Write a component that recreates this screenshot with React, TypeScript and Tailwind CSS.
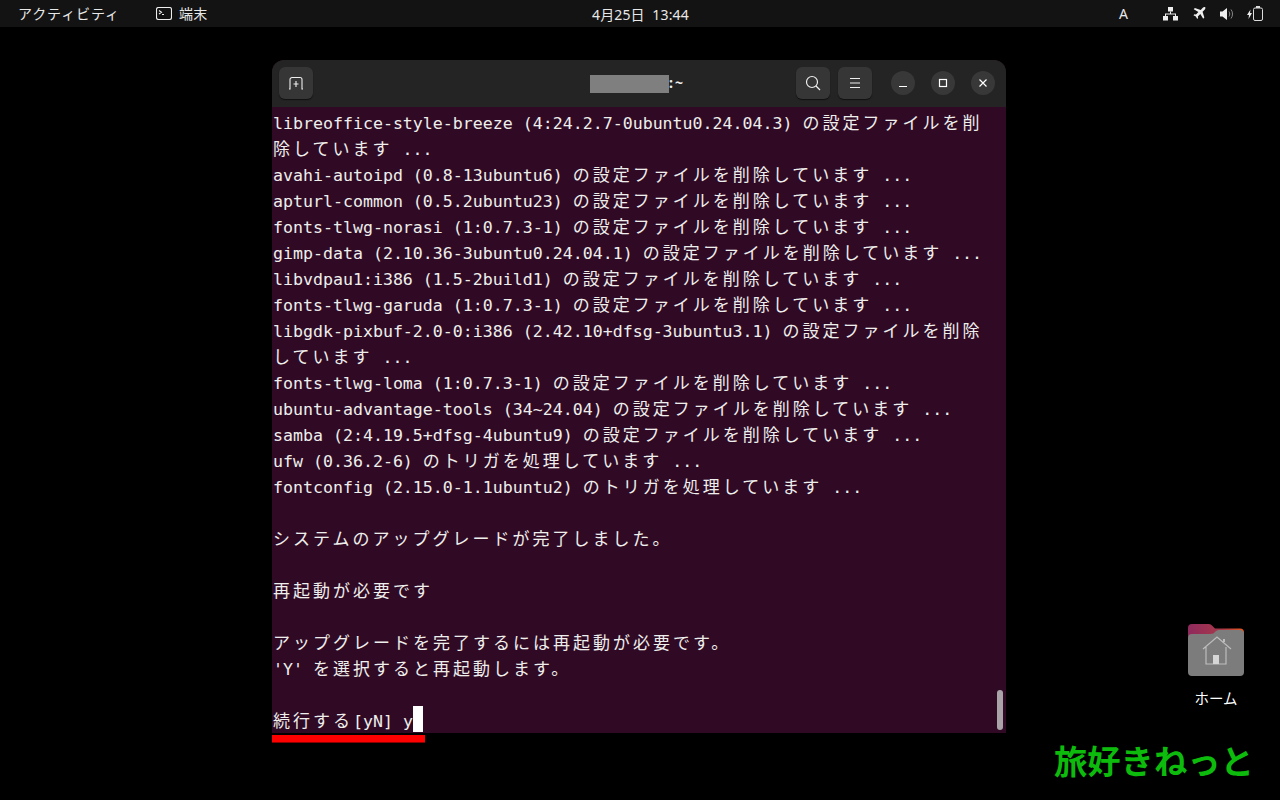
const lines = [
  'libreoffice-style-breeze (4:24.2.7-0ubuntu0.24.04.3) の設定ファイルを削',
  '除しています ...',
  'avahi-autoipd (0.8-13ubuntu6) の設定ファイルを削除しています ...',
  'apturl-common (0.5.2ubuntu23) の設定ファイルを削除しています ...',
  'fonts-tlwg-norasi (1:0.7.3-1) の設定ファイルを削除しています ...',
  'gimp-data (2.10.36-3ubuntu0.24.04.1) の設定ファイルを削除しています ...',
  'libvdpau1:i386 (1.5-2build1) の設定ファイルを削除しています ...',
  'fonts-tlwg-garuda (1:0.7.3-1) の設定ファイルを削除しています ...',
  'libgdk-pixbuf-2.0-0:i386 (2.42.10+dfsg-3ubuntu3.1) の設定ファイルを削除',
  'しています ...',
  'fonts-tlwg-loma (1:0.7.3-1) の設定ファイルを削除しています ...',
  'ubuntu-advantage-tools (34~24.04) の設定ファイルを削除しています ...',
  'samba (2:4.19.5+dfsg-4ubuntu9) の設定ファイルを削除しています ...',
  'ufw (0.36.2-6) のトリガを処理しています ...',
  'fontconfig (2.15.0-1.1ubuntu2) のトリガを処理しています ...',
  '',
  'システムのアップグレードが完了しました。',
  '',
  '再起動が必要です',
  '',
  'アップグレードを完了するには再起動が必要です。',
  "'Y' を選択すると再起動します。",
  '',
];

// terminal cells: latin 10px, CJK 20px, so each run gets its own tracking
function TermLine({ text }: { text: string }) {
  const runs = text.match(/[\u3000-\u9fff]+|[^\u3000-\u9fff]+/g) ?? [];
  return (
    <div className="h-[26px] leading-[26px] whitespace-pre">
      {runs.map((run, i) =>
        /[\u3000-\u9fff]/.test(run) ? (
          <span key={i} className="text-[17px] tracking-[3px]">{run}</span>
        ) : (
          <span key={i} className="text-[16.6px]">{run}</span>
        ),
      )}
    </div>
  );
}

function HeaderButton({ children }: { children: React.ReactNode }) {
  return (
    <div className="w-[34px] h-[32px] rounded-[6px] bg-[#363636] shadow-[0_1px_1px_#111] flex items-center justify-center text-[#eeeeee]">
      {children}
    </div>
  );
}

function WindowButton({ children }: { children: React.ReactNode }) {
  return (
    <div className="w-[24px] h-[24px] rounded-full bg-[#383838] flex items-center justify-center text-white">
      {children}
    </div>
  );
}

export default function App() {
  return (
    <div className="relative w-[1280px] h-[800px] overflow-hidden bg-black font-['Noto_Sans','Noto_Sans_CJK_JP',sans-serif]">
      {/* Top bar */}
      <div className="h-[27px] bg-[#131313] flex items-center text-[14px] text-[#e8e8e8] relative">
        <span className="ml-[18px] w-[100px] tracking-[0.9px] whitespace-nowrap">アクティビティ</span>
        <svg className="ml-[38px]" width="16" height="14" viewBox="0 0 16 14" fill="none" stroke="#eee" strokeWidth="1.1">
          <rect x="0.5" y="0.5" width="15" height="12" rx="2" />
          <path d="M3 3.5l2.5 1.8L3 7M6 7.5h2" />
        </svg>
        <span className="ml-[7px] tracking-[0.3px]">端末</span>
        <span className="absolute left-[592px] top-[4px] leading-[22px] whitespace-pre tracking-[0.15px]">4月25日  13:44</span>
        <div className="ml-auto flex items-center">
          <span className="text-[14px] mr-[35px]">A</span>
          <svg className="mr-[15px]" width="15" height="14" viewBox="0 0 15 14" fill="#eee">
            <rect x="5" y="0" width="5" height="4.5" />
            <rect x="0" y="9" width="5" height="4.5" />
            <rect x="10" y="9" width="5" height="4.5" />
            <path d="M7 4.500h1V6.500h5v2.500h-1V7.500H3V9H2V6.500h5z" />
          </svg>
          <svg className="mr-[14px]" width="13" height="13" viewBox="0 0 14 14" fill="#eee">
            <path d="M13.5.5c-.8-.8-2.200-.4-3 .4L8.300 3.100 2 1.200.8 2.400l5 3.100-2.600 2.700-1.700-.3-1 1 2.600 1.400 1.400 2.600 1-1-.3-1.700 2.700-2.600 3.100 5 1.200-1.200-1.900-6.300 2.200-2.200c.8-.8 1.200-2.200.4-3z" />
          </svg>
          <svg className="mr-[13px]" width="14" height="14" viewBox="0 0 14 14" fill="none">
            <path d="M0 4.500h2.500L7 1v12L2.500 9.500H0z" fill="#eee" />
            <path d="M9 4.500c1 1.500 1 3.500 0 5M11 2.500c2 2.500 2 6.500 0 9" stroke="#888" strokeWidth="1" />
          </svg>
          <svg className="mr-[17px]" width="16" height="15" viewBox="0 0 16 15" fill="none">
            <path d="M3.500 3.500L0 9h2L1.500 13 5 7H3z" fill="#eee" />
            <rect x="6.500" y="2" width="9" height="12.500" rx="1.500" stroke="#ddd" />
            <rect x="9" y="0" width="4" height="2" fill="#ddd" />
          </svg>
        </div>
      </div>

      {/* Terminal window */}
      <div className="ml-[272px] mt-[33px] w-[734px] h-[673px] rounded-t-[12px] overflow-hidden relative bg-[#300a24] flex flex-col">
        <div className="h-[47px] shrink-0 pb-[1px] bg-[#242424] flex items-center relative">
          <div className="ml-[7px]">
            <HeaderButton>
              <svg width="16" height="14" viewBox="0 0 16 14" fill="none" stroke="currentColor" strokeWidth="1.1">
                <path d="M1 13h1V3.500a2 2 0 0 1 2-2h8a2 2 0 0 1 2 2V13h1M8 5v6M5.500 8h5" />
              </svg>
            </HeaderButton>
          </div>
          <div className="absolute left-[318px] top-[15px] w-[79px] h-[18px] bg-[#7f7f7f]" />
          <span className="absolute left-[397px] top-[12px] text-[14px] leading-[22px] font-bold tracking-[2px] text-[#eeeeee]">:~</span>
          <div className="ml-auto flex items-center">
            <div className="flex gap-[8px] mr-[19px]">
              <HeaderButton>
                <svg width="16" height="16" viewBox="0 0 16 16" fill="none" stroke="currentColor" strokeWidth="1.2">
                  <circle cx="7" cy="7" r="5.500" />
                  <path d="M11 11l4 4" />
                </svg>
              </HeaderButton>
              <HeaderButton>
                <svg width="12" height="12" viewBox="0 0 12 12" fill="none" stroke="currentColor" strokeWidth="1">
                  <path d="M1 1.500h10M1 6h10M1 10.500h10" />
                </svg>
              </HeaderButton>
            </div>
            <div className="flex gap-[16px] mr-[11px]">
              <WindowButton>
                <svg width="10" height="10" viewBox="0 0 10 10" fill="none" stroke="currentColor" strokeWidth="1.2">
                  <path d="M1 8.500h8" />
                </svg>
              </WindowButton>
              <WindowButton>
                <svg width="10" height="10" viewBox="0 0 10 10" fill="none" stroke="currentColor" strokeWidth="1.2">
                  <rect x="1.500" y="1.500" width="7" height="7" />
                </svg>
              </WindowButton>
              <WindowButton>
                <svg width="10" height="10" viewBox="0 0 10 10" fill="none" stroke="currentColor" strokeWidth="1.2">
                  <path d="M1.500 1.500l7 7M8.500 1.500l-7 7" />
                </svg>
              </WindowButton>
            </div>
          </div>
        </div>

        {/* Terminal body */}
        <div className="flex-1 pt-[3px] pl-[1px] text-[#eeeeec] font-['DejaVu_Sans_Mono','Noto_Sans_CJK_JP',monospace]">
          {lines.map((line, i) => (
            <TermLine key={i} text={line} />
          ))}
          <div className="flex items-start">
            <TermLine text="続行する[yN] y" />
            <div className="w-[10px] h-[26px] -mt-[2px] bg-white" />
          </div>
        </div>
        <div className="absolute left-[725px] top-[630px] w-[6px] h-[40px] rounded-full bg-[#a8a4a7]" />
      </div>

      {/* Red underline annotation */}
      <div className="absolute left-[272px] top-[735px] w-[153px] h-[7px] bg-[#ff0000] shadow-[0_1px_0_#8a0000]" />

      {/* Desktop home icon */}
      <div className="absolute left-[1176px] top-[622px] w-[80px] flex flex-col items-center">
        <svg width="56" height="54" viewBox="0 0 56 54">
          <defs>
            <linearGradient id="folderTop" x1="0" y1="0" x2="1" y2="0">
              <stop offset="0" stopColor="#8e2a5d" />
              <stop offset="0.6" stopColor="#a8394a" />
              <stop offset="1" stopColor="#e8591f" />
            </linearGradient>
          </defs>
          <path d="M0 6a4 4 0 0 1 4-4h17a4 4 0 0 1 3 1.500l3 3h25a4 4 0 0 1 4 4V30H0z" fill="url(#folderTop)" />
          <path d="M0 16a4 4 0 0 1 4-4h18c3 0 4-1 5-2 1-1 2-2 4-2h21a4 4 0 0 1 4 4v38a4 4 0 0 1-4 4H4a4 4 0 0 1-4-4z" fill="#7c7c7c" />
          <path d="M15 27l14-12 14 12M18 25v17h20V25" fill="none" stroke="#bdbdbd" strokeWidth="1.200" />
          <rect x="25" y="33" width="6" height="9" fill="#d5d5d5" />
          <rect x="35" y="17" width="2" height="3" fill="#bdbdbd" />
        </svg>
        <span className="mt-[12px] text-[14.5px] leading-[20px] text-white">ホーム</span>
      </div>

      {/* Site watermark */}
      <div className="absolute left-[1054px] top-[741px] text-[33.3px] leading-[40px] font-bold text-[#0cbb0c] whitespace-nowrap">
        旅好きねっと
      </div>
    </div>
  );
}
